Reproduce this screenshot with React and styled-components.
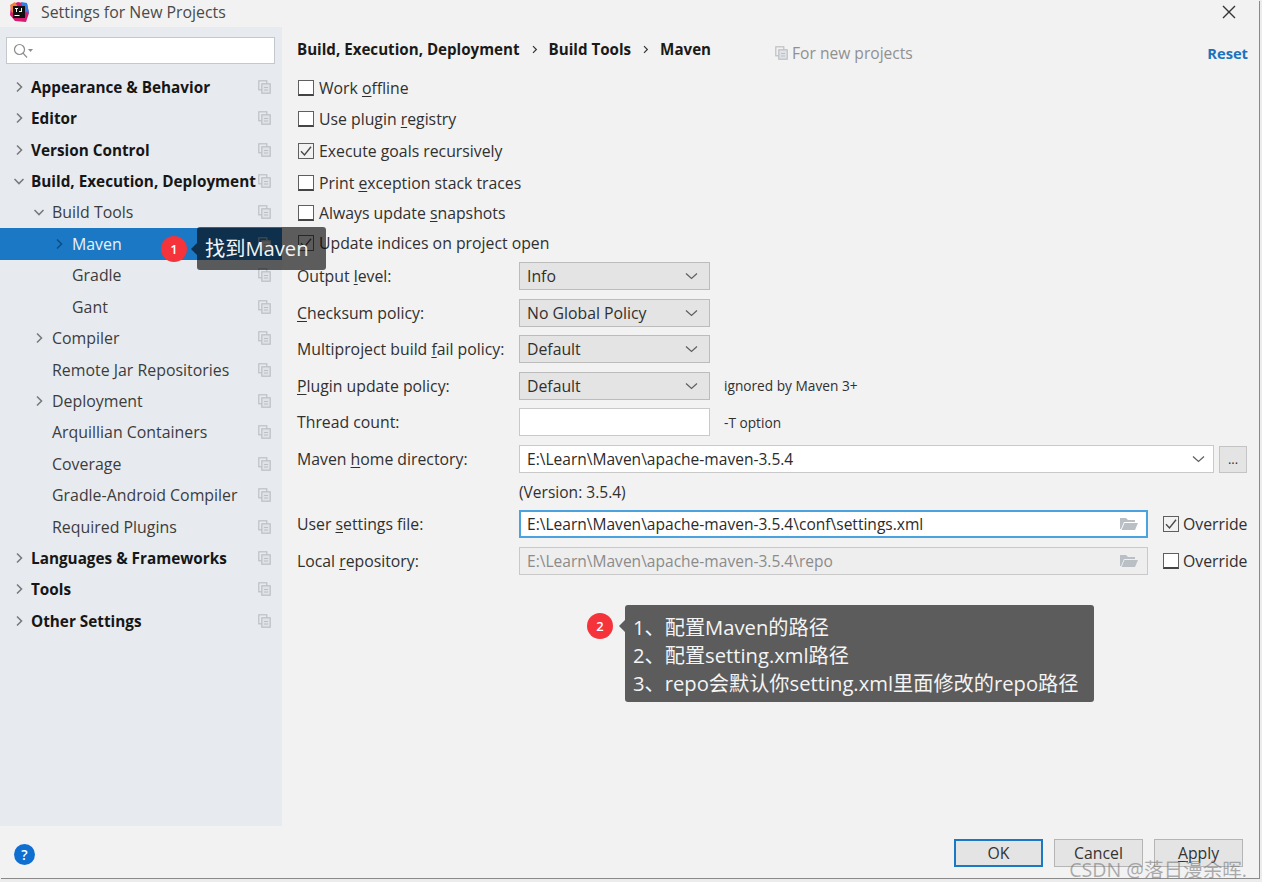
import React from 'react';
import styled, { createGlobalStyle } from 'styled-components';

const Global = createGlobalStyle`
    html, body {
        margin: 0;
        padding: 0;
        background: #ececec;
    }
    * {
        box-sizing: border-box;
    }
    u {
        text-underline-offset: 2px;
    }
`;

const FONT = `"Open Sans", "Noto Sans", "Noto Sans CJK SC", sans-serif`;
const NOTE_BG = 'rgba(8, 8, 8, 0.64)';

const sideItems = [
    { label: 'Appearance & Behavior', bold: true, level: 0, arrow: 'right' },
    { label: 'Editor', bold: true, level: 0, arrow: 'right' },
    { label: 'Version Control', bold: true, level: 0, arrow: 'right' },
    { label: 'Build, Execution, Deployment', bold: true, level: 0, arrow: 'down' },
    { label: 'Build Tools', level: 1, arrow: 'down' },
    { label: 'Maven', level: 2, arrow: 'right', selected: true },
    { label: 'Gradle', level: 2 },
    { label: 'Gant', level: 2 },
    { label: 'Compiler', level: 1, arrow: 'right' },
    { label: 'Remote Jar Repositories', level: 1 },
    { label: 'Deployment', level: 1, arrow: 'right' },
    { label: 'Arquillian Containers', level: 1 },
    { label: 'Coverage', level: 1 },
    { label: 'Gradle-Android Compiler', level: 1 },
    { label: 'Required Plugins', level: 1 },
    { label: 'Languages & Frameworks', bold: true, level: 0, arrow: 'right' },
    { label: 'Tools', bold: true, level: 0, arrow: 'right' },
    { label: 'Other Settings', bold: true, level: 0, arrow: 'right' },
];

const Page = styled.div`
    position: relative;
    width: 1262px;
    height: 882px;
    overflow: hidden;
`;

const Window = styled.div`
    position: relative;
    width: 1259px;
    height: 878px;
    background: #f2f2f2;
    box-shadow: 1px 1px 0 #8a8a8a;
    font-family: ${FONT};
    font-size: 15.8px;
    color: #303030;
    overflow: hidden;
    display: flex;
    flex-direction: column;
`;

const TitleBar = styled.div`
    height: 27px;
    flex: none;
    display: flex;
    align-items: center;
    padding: 0 23px 3px 9px;
    gap: 12px;
    color: #4a4a4a;
`;

const TitleText = styled.span`
    flex: 1;
    font-size: 15.85px;
`;

const Body = styled.div`
    flex: 1;
    display: flex;
    min-height: 0;
`;

const Sidebar = styled.div`
    width: 282px;
    flex: none;
    background: #e7ebf0;
    padding-top: 10px;
`;

const SearchBox = styled.div`
    margin: 0 7px 0 6px;
    height: 27px;
    background: #fff;
    border: 1px solid #c4c8cc;
    display: flex;
    align-items: center;
    padding-left: 6px;
`;

const Tree = styled.div`
    margin-top: 7px;
`;

const TreeRow = styled.div`
    height: 31.43px;
    display: flex;
    align-items: center;
    padding-left: ${(p) => 11 + p.$level * 20}px;
    padding-right: 11px;
    background: ${(p) => (p.$selected ? '#1b78c4' : 'transparent')};
    color: ${(p) => (p.$selected ? '#e8f2fa' : p.$bold ? '#161616' : '#3c3c3c')};
    font-weight: ${(p) => (p.$bold ? 700 : 400)};
    font-size: ${(p) => (p.$bold ? '15.3px' : '15.9px')};
    white-space: nowrap;
`;

const ArrowSlot = styled.span`
    width: ${(p) => (p.$bold ? 20 : 21)}px;
    flex: none;
    display: flex;
    align-items: center;
    padding-left: 2px;
`;

const TreeLabel = styled.span`
    flex: 1;
`;

const Main = styled.div`
    flex: 1;
    min-width: 0;
    padding: 9px 11px 0 15px;
    position: relative;
`;

const Crumbs = styled.div`
    height: 26px;
    display: flex;
    align-items: center;
    font-weight: 700;
    font-size: 15.15px;
    color: #1a1a1a;
`;

const CrumbSep = styled.span`
    margin: 0 10px;
    display: flex;
`;

const ForNew = styled.span`
    margin-left: 64px;
    margin-top: 8px;
    display: flex;
    align-items: center;
    gap: 4px;
    font-weight: 400;
    font-size: 15.6px;
    color: #909090;
`;

const Reset = styled.span`
    margin-left: auto;
    margin-top: 8px;
    font-weight: 700;
    font-size: 14.7px;
    color: #1b73bd;
`;

const Form = styled.div`
    margin-top: 10px;
`;

const Row = styled.div`
    height: ${(p) => p.$h}px;
    display: flex;
    align-items: center;
    white-space: nowrap;
`;

const Box = styled.span`
    width: 16px;
    height: 16px;
    flex: none;
    background: ${(p) => (p.$checked ? '#f2f2f2' : '#fff')};
    border: 1px solid #5f5f5f;
    border-bottom: ${(p) => (p.$checked ? '1px solid #5f5f5f' : '2px solid #444')};
    margin-left: ${(p) => (p.$inline ? 0 : 1)}px;
    margin-right: ${(p) => (p.$inline ? 4 : 5)}px;
    display: flex;
    align-items: center;
    justify-content: center;
`;

const Label = styled.span`
    width: 222px;
    flex: none;
`;

const Select = styled.div`
    width: 191px;
    height: 28px;
    flex: none;
    background: #e4e4e4;
    border: 1px solid #bcbcbc;
    display: flex;
    align-items: center;
    justify-content: space-between;
    padding: 0 11px 0 7px;
`;

const Input = styled.div`
    width: ${(p) => p.$w}px;
    height: 28px;
    flex: none;
    background: ${(p) => (p.$disabled ? '#eeeeee' : '#fff')};
    border: ${(p) => (p.$focus ? '2px solid #4aa3df' : '1px solid #c9c9c9')};
    color: ${(p) => (p.$disabled ? '#8b8b8b' : '#2b2b2b')};
    font-size: 15.55px;
    padding: 0 ${(p) => (p.$focus ? 7 : 8)}px 0 ${(p) => (p.$focus ? 6 : 7)}px;
    display: flex;
    align-items: center;
    justify-content: space-between;
`;

const Hint = styled.span`
    margin-left: 14px;
    font-size: 13.7px;
`;

const Dots = styled.div`
    width: 28px;
    height: 27px;
    margin-left: 5px;
    background: #e4e4e4;
    border: 1px solid #c4c4c4;
    font-size: 13px;
    display: flex;
    align-items: center;
    justify-content: center;
`;

const Override = styled.span`
    margin-left: 15px;
    display: flex;
    align-items: center;
`;

const Version = styled.span`
    margin-left: 222px;
    font-size: 15.55px;
`;

const Footer = styled.div`
    height: 52px;
    flex: none;
    display: flex;
    align-items: flex-start;
    padding: 13px 16px 0 14px;
    gap: 11px;
`;

const Help = styled.span`
    width: 21px;
    height: 21px;
    margin-top: 5px;
    margin-right: auto;
    border-radius: 50%;
    background: #0f6fd1;
    color: #fff;
    font-size: 14px;
    font-weight: 600;
    display: flex;
    align-items: center;
    justify-content: center;
`;

const Button = styled.div`
    width: 89px;
    height: 28px;
    background: #e4e4e4;
    border: ${(p) => (p.$primary ? '2px solid #1b78c4' : '1px solid #b5b5b5')};
    display: flex;
    align-items: center;
    justify-content: center;
    color: #333;
`;

const Badge = styled.span`
    position: absolute;
    left: ${(p) => p.$x}px;
    top: ${(p) => p.$y}px;
    width: 26px;
    height: 26px;
    border-radius: 50%;
    background: #f5333a;
    color: #fff;
    font-size: 13px;
    font-weight: 600;
    display: flex;
    align-items: center;
    justify-content: center;
    z-index: 3;
`;

const Note = styled.div`
    position: absolute;
    left: ${(p) => p.$x}px;
    top: ${(p) => p.$y}px;
    background: ${NOTE_BG};
    color: #f4f4f4;
    border-radius: 3px;
    font-size: 20.2px;
    line-height: 28px;
    padding: ${(p) => p.$pad};
    white-space: nowrap;
    z-index: 2;

    &::before {
        content: '';
        position: absolute;
        left: -6px;
        top: ${(p) => p.$arrow}px;
        border-style: solid;
        border-width: 6px 6px 6px 0;
        border-color: transparent ${NOTE_BG} transparent transparent;
    }
`;

const Watermark = styled.span`
    position: absolute;
    right: 15px;
    top: 858px;
    font-family: ${FONT};
    font-size: 19.6px;
    line-height: 23px;
    color: rgba(120, 120, 120, 0.6);
    z-index: 4;
    white-space: nowrap;
`;

const Chevron = ({ dir = 'right', color = '#7a7a7a', size = 12 }) => (
    <svg width={size} height={size} viewBox="0 0 12 12" fill="none" stroke={color} strokeWidth="1.6">
        {dir === 'right' ? <path d="M4 1.5 8.5 6 4 10.5" /> : <path d="M1.5 4 6 8.5 10.5 4" />}
    </svg>
);

const Caret = () => (
    <svg width="13" height="8" viewBox="0 0 13 8" fill="none" stroke="#5e5e5e" strokeWidth="1.2">
        <path d="M1 1.5 6.5 6.5 12 1.5" />
    </svg>
);

const CopyIcon = ({ color = '#bcc0c4' }) => (
    <svg width="13" height="14" viewBox="0 0 13 14" fill="none" stroke={color} strokeWidth="1.2">
        <rect x="0.8" y="0.8" width="8" height="9" />
        <rect x="3.8" y="3.8" width="8.4" height="9.4" fill="#dfe3e7" />
        <path d="M6 7.5h4M6 10h4" />
    </svg>
);

const Folder = ({ color = '#b9bfc4' }) => (
    <svg width="20" height="14" viewBox="0 0 20 14" fill={color}>
        <path d="M1 1h6l2 2h7v2H5L2 12H1z" />
        <path d="M5.5 6H19l-3 7H2.5z" />
    </svg>
);

const Check = () => (
    <svg width="14" height="14" viewBox="0 0 14 14" fill="none" stroke="#4a4a4a" strokeWidth="1.4">
        <path d="M2 7.2 5.5 11 12 2.8" />
    </svg>
);

const Logo = () => (
    <svg width="20" height="20" viewBox="0 0 20 20">
        <path d="M2 3 9 0l9 2 2 9-3 9-11-1-5-6z" fill="#d81b72" />
        <path d="M12 0l6 1 2 10-6-2z" fill="#2f7fe6" />
        <path d="M1 3l5-3 3 5-6 6z" fill="#f0813a" />
        <rect x="4" y="4" width="12" height="12" fill="#111" />
        <rect x="5.5" y="13" width="5" height="1" fill="#fff" />
        <path d="M6 6h3v1H8v3H7V7H6zM10 6h3v4h-3V9h2V6z" fill="#fff" />
    </svg>
);

const SearchIcon = () => (
    <svg width="20" height="16" viewBox="0 0 20 16" fill="none" stroke="#8c8c8c" strokeWidth="1.2">
        <circle cx="6.5" cy="6.5" r="5" />
        <path d="M10 10.2 14 14.5" />
        <path d="M15 6h5l-2.5 3z" fill="#8c8c8c" stroke="none" />
    </svg>
);

const CloseIcon = () => (
    <svg width="14" height="14" viewBox="0 0 14 14" fill="none" stroke="#333" strokeWidth="1.4">
        <path d="M1 1 13 13M13 1 1 13" />
    </svg>
);

const CheckRow = ({ h, checked, children }) => (
    <Row $h={h}>
        <Box $checked={checked}>{checked && <Check />}</Box>
        <span>{children}</span>
    </Row>
);

const SelectRow = ({ h, label, value, hint }) => (
    <Row $h={h}>
        <Label>{label}</Label>
        <Select>
            {value}
            <Caret />
        </Select>
        {hint && <Hint>{hint}</Hint>}
    </Row>
);

const App = () => {
    return (
        <Page>
            <Global />
            <Window>
                <TitleBar>
                    <Logo />
                    <TitleText>Settings for New Projects</TitleText>
                    <CloseIcon />
                </TitleBar>
                <Body>
                    <Sidebar>
                        <SearchBox>
                            <SearchIcon />
                        </SearchBox>
                        <Tree>
                            {sideItems.map((item) => (
                                <TreeRow
                                    key={item.label}
                                    $level={item.level}
                                    $bold={item.bold}
                                    $selected={item.selected}
                                >
                                    <ArrowSlot $bold={item.bold}>
                                        {item.arrow && (
                                            <Chevron
                                                dir={item.arrow}
                                                color={item.selected ? '#0d4f85' : '#7a7a7a'}
                                            />
                                        )}
                                    </ArrowSlot>
                                    <TreeLabel>{item.label}</TreeLabel>
                                    <CopyIcon />
                                </TreeRow>
                            ))}
                        </Tree>
                    </Sidebar>
                    <Main>
                        <Crumbs>
                            Build, Execution, Deployment
                            <CrumbSep>
                                <Chevron color="#333" size={9} />
                            </CrumbSep>
                            Build Tools
                            <CrumbSep>
                                <Chevron color="#333" size={9} />
                            </CrumbSep>
                            Maven
                            <ForNew>
                                <CopyIcon />
                                For new projects
                            </ForNew>
                            <Reset>Reset</Reset>
                        </Crumbs>
                        <Form>
                            <CheckRow h={31}>
                                Work <u>o</u>ffline
                            </CheckRow>
                            <CheckRow h={32}>
                                Use plugin <u>r</u>egistry
                            </CheckRow>
                            <CheckRow h={32} checked>
                                Execute <u>g</u>oals recursively
                            </CheckRow>
                            <CheckRow h={31}>
                                Print <u>e</u>xception stack traces
                            </CheckRow>
                            <CheckRow h={30}>
                                Always update <u>s</u>napshots
                            </CheckRow>
                            <CheckRow h={30} checked>
                                Update indices on project open
                            </CheckRow>
                            <SelectRow
                                h={36}
                                label={
                                    <>
                                        Output <u>l</u>evel:
                                    </>
                                }
                                value="Info"
                            />
                            <SelectRow
                                h={37}
                                label={
                                    <>
                                        <u>C</u>hecksum policy:
                                    </>
                                }
                                value="No Global Policy"
                            />
                            <SelectRow
                                h={36}
                                label={
                                    <>
                                        Multiproject build <u>f</u>ail policy:
                                    </>
                                }
                                value="Default"
                            />
                            <SelectRow
                                h={37}
                                label={
                                    <>
                                        <u>P</u>lugin update policy:
                                    </>
                                }
                                value="Default"
                                hint="ignored by Maven 3+"
                            />
                            <Row $h={36}>
                                <Label>Thread count:</Label>
                                <Input $w={191} />
                                <Hint>-T option</Hint>
                            </Row>
                            <Row $h={38}>
                                <Label>
                                    Maven <u>h</u>ome directory:
                                </Label>
                                <Input $w={695}>
                                    E:\Learn\Maven\apache-maven-3.5.4
                                    <Caret />
                                </Input>
                                <Dots>...</Dots>
                            </Row>
                            <Row $h={28}>
                                <Version>(Version: 3.5.4)</Version>
                            </Row>
                            <Row $h={36}>
                                <Label>
                                    User <u>s</u>ettings file:
                                </Label>
                                <Input $w={629} $focus>
                                    E:\Learn\Maven\apache-maven-3.5.4\conf\settings.xml
                                    <Folder />
                                </Input>
                                <Override>
                                    <Box $checked $inline>
                                        <Check />
                                    </Box>
                                    Override
                                </Override>
                            </Row>
                            <Row $h={37}>
                                <Label>
                                    Local <u>r</u>epository:
                                </Label>
                                <Input $w={629} $disabled>
                                    E:\Learn\Maven\apache-maven-3.5.4\repo
                                    <Folder />
                                </Input>
                                <Override>
                                    <Box $inline />
                                    Override
                                </Override>
                            </Row>
                        </Form>
                    </Main>
                </Body>
                <Footer>
                    <Help>?</Help>
                    <Button $primary>OK</Button>
                    <Button>Cancel</Button>
                    <Button>
                        <u>A</u>pply
                    </Button>
                </Footer>

                <Badge $x={161} $y={236}>1</Badge>
                <Note $x={197} $y={227} $pad="7px 17px 8px 8px" $arrow={16}>
                    找到Maven
                </Note>
                <Badge $x={587} $y={613}>2</Badge>
                <Note $x={625} $y={605} $pad="8px 16px 5px 8px" $arrow={15}>
                    1、配置Maven的路径
                    <br />
                    2、配置setting.xml路径
                    <br />
                    3、repo会默认你setting.xml里面修改的repo路径
                </Note>
            </Window>
            <Watermark>CSDN @落日漫余晖.</Watermark>
        </Page>
    );
};

export default App;
